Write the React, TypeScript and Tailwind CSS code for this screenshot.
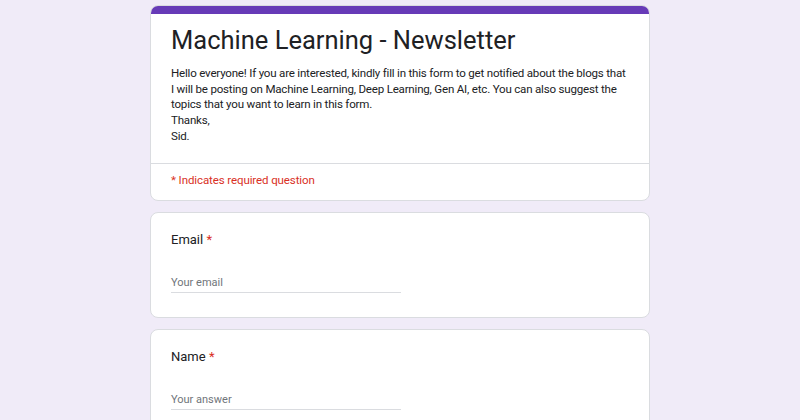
export default function App() {
  return (
    <div className="min-h-[420px] bg-[#f0ebf8] font-['Roboto',sans-serif] text-[#202124]">
      <div className="mx-auto flex w-[500px] flex-col gap-[11px] pt-[5px] pb-6">
        <div className="overflow-hidden rounded-lg border border-[#dadce0] bg-white">
          <div className="h-[8px] bg-[#673ab7]" />
          <div className="px-5 pt-[8px] pb-[18px]">
            <h1 className="text-[25.5px] leading-[36px] font-normal">Machine Learning - Newsletter</h1>
            <p className="mt-[8px] text-[11.55px] leading-[15.7px] tracking-[-0.2px]">
              Hello everyone! If you are interested, kindly fill in this form to get notified about the blogs that I will be posting on Machine Learning, Deep Learning, Gen AI, etc. You can also suggest the topics that you want to learn in this form.
              <br />
              Thanks,
              <br />
              Sid.
            </p>
          </div>
          <div className="border-t border-[#dadce0] px-5 pt-[8px] pb-[12px] text-[11.5px] leading-[16px] tracking-[-0.1px] text-[#d93025]">
            * Indicates required question
          </div>
        </div>

        <Question label="Email" placeholder="Your email" />
        <Question label="Name" placeholder="Your answer" />
      </div>
    </div>
  );
}

function Question({ label, placeholder }: { label: string; placeholder: string }) {
  return (
    <div className="rounded-lg border border-[#dadce0] bg-white px-5 pt-[17px] pb-[24px]">
      <div className="text-[13px] leading-[20px]">
        {label} <span className="text-[#d93025]">*</span>
      </div>
      <div className="mt-[25px] w-[230px] border-b border-[#dadce0] pb-[1px] text-[11px] leading-[16px] text-[#70757a]">
        {placeholder}
      </div>
    </div>
  );
}
